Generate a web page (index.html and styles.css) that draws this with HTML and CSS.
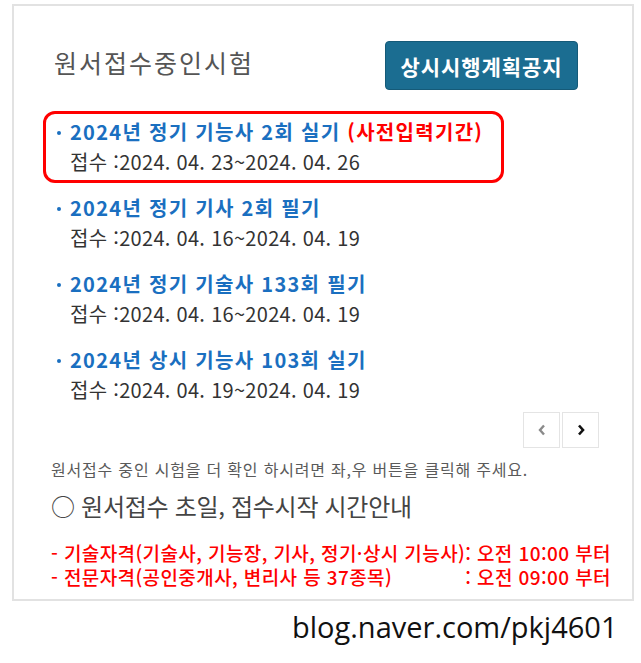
FILE: index.html
```html
<!DOCTYPE html>
<html lang="ko">
<head>
<meta charset="utf-8">
<link rel="stylesheet" href="styles.css">
</head>
<body>
<div class="panel">
  <div class="head">
    <h2 class="title">원서접수중인시험</h2>
    <a class="notice-btn">상시시행계획공지</a>
  </div>
  <ul class="exams">
    <li class="exam hl">
      <div class="name">2024년 정기 기능사 2회 실기 <span class="pre">(사전입력기간)</span></div>
      <div class="date">접수 :2024. 04. 23~2024. 04. 26</div>
    </li>
    <li class="exam">
      <div class="name">2024년 정기 기사 2회 필기</div>
      <div class="date">접수 :2024. 04. 16~2024. 04. 19</div>
    </li>
    <li class="exam">
      <div class="name">2024년 정기 기술사 133회 필기</div>
      <div class="date">접수 :2024. 04. 16~2024. 04. 19</div>
    </li>
    <li class="exam">
      <div class="name">2024년 상시 기능사 103회 실기</div>
      <div class="date">접수 :2024. 04. 19~2024. 04. 19</div>
    </li>
  </ul>
  <div class="nav">
    <button class="nav-btn prev"><svg width="12" height="14" viewBox="0 0 12 14"><path d="M8 2.5 L4 7 L8 11.5" fill="none" stroke="#8a8a8a" stroke-width="2.4"/></svg></button>
    <button class="nav-btn next"><svg width="12" height="14" viewBox="0 0 12 14"><path d="M4 2.5 L8 7 L4 11.5" fill="none" stroke="#111" stroke-width="2.6"/></svg></button>
  </div>
  <p class="hint">원서접수 중인 시험을 더 확인 하시려면 좌,우 버튼을 클릭해 주세요.</p>
  <h3 class="sub">○ 원서접수 초일, 접수시작 시간안내</h3>
  <div class="times">
    <div class="row">- 기술자격(기술사, 기능장, 기사, 정기·상시 기능사): 오전 10:00 부터</div>
    <div class="row split"><span>- 전문자격(공인중개사, 변리사 등 37종목)</span><span>: 오전 09:00 부터</span></div>
  </div>
</div>
<div class="watermark">blog.naver.com/pkj4601</div>
</body>
</html>
```

FILE: styles.css
```css
* { box-sizing: border-box; }
body {
  margin: 0;
  background: #fff;
  font-family: "Noto Sans CJK KR", "Noto Sans", sans-serif;
  width: 641px;
}
.panel {
  margin: 4px 0 0 12px;
  width: 622px;
  height: 597px;
  border: 2px solid #e2e2e2;
  display: flex;
  flex-direction: column;
}
.head {
  display: flex;
  justify-content: space-between;
  align-items: center;
  padding: 35px 54px 0 40px;
}
.title {
  margin: 0 0 8px 0;
  font-size: 25px;
  font-weight: 400;
  color: #555;
  letter-spacing: 2px;
  line-height: 30px;
}
.notice-btn {
  display: flex;
  align-items: center;
  justify-content: center;
  width: 193px;
  height: 49px;
  background: #1b6d91;
  border: 1px solid #155a78;
  border-radius: 4px;
  color: #fff;
  font-size: 21px;
  font-weight: 700;
  letter-spacing: 0.9px;
}
.exams {
  list-style: none;
  margin: 27px 0 0 0;
  padding: 0;
  display: flex;
  flex-direction: column;
  gap: 16px;
}
.exam {
  position: relative;
  padding-left: 56px;
  line-height: 30px;
  font-size: 20px;
}
.exam::before {
  content: "";
  position: absolute;
  left: 43px;
  top: 14px;
  width: 4px;
  height: 4px;
  border-radius: 50%;
  background: #1a6fc0;
}
.exam.hl {
  margin: -6px 0 -6px 29px;
  width: 461px;
  padding: 3px 0 3px 24px;
  border: 3px solid #f00;
  border-radius: 12px;
}
.exam.hl::before { left: 11px; top: 17px; }
.name {
  color: #1a6fc0;
  font-weight: 700;
  letter-spacing: 1.3px;
  white-space: nowrap;
}
.pre { color: #f00; }
.date {
  color: #333;
  letter-spacing: 0.3px;
  white-space: nowrap;
}
.nav {
  display: flex;
  justify-content: flex-end;
  gap: 2px;
  padding-right: 33px;
  margin-top: 7px;
}
.nav-btn {
  width: 37px;
  height: 36px;
  border: 1px solid #e4e4e4;
  background: #fff;
  display: flex;
  align-items: center;
  justify-content: center;
  padding: 0;
}
.hint {
  margin: 11px 0 0 37px;
  font-size: 16px;
  color: #5a5a5a;
  letter-spacing: 0.8px;
  line-height: 20px;
  white-space: nowrap;
}
.sub {
  margin: 12px 0 0 37px;
  font-size: 24px;
  font-weight: 400;
  color: #444;
  letter-spacing: -0.3px;
  line-height: 30px;
  white-space: nowrap;
}
.times {
  margin: 20px 0 0 37px;
  width: 560px;
  color: #f00;
  font-size: 19px;
  font-weight: 500;
  letter-spacing: 0.4px;
  line-height: 24px;
}
.row { white-space: nowrap; }
.row.split { display: flex; justify-content: space-between; }
.watermark {
  margin: 6px 0 0 292px;
  font-family: "Open Sans", "Noto Sans", sans-serif;
  font-size: 29px;
  color: #111;
  line-height: 40px;
}
```
